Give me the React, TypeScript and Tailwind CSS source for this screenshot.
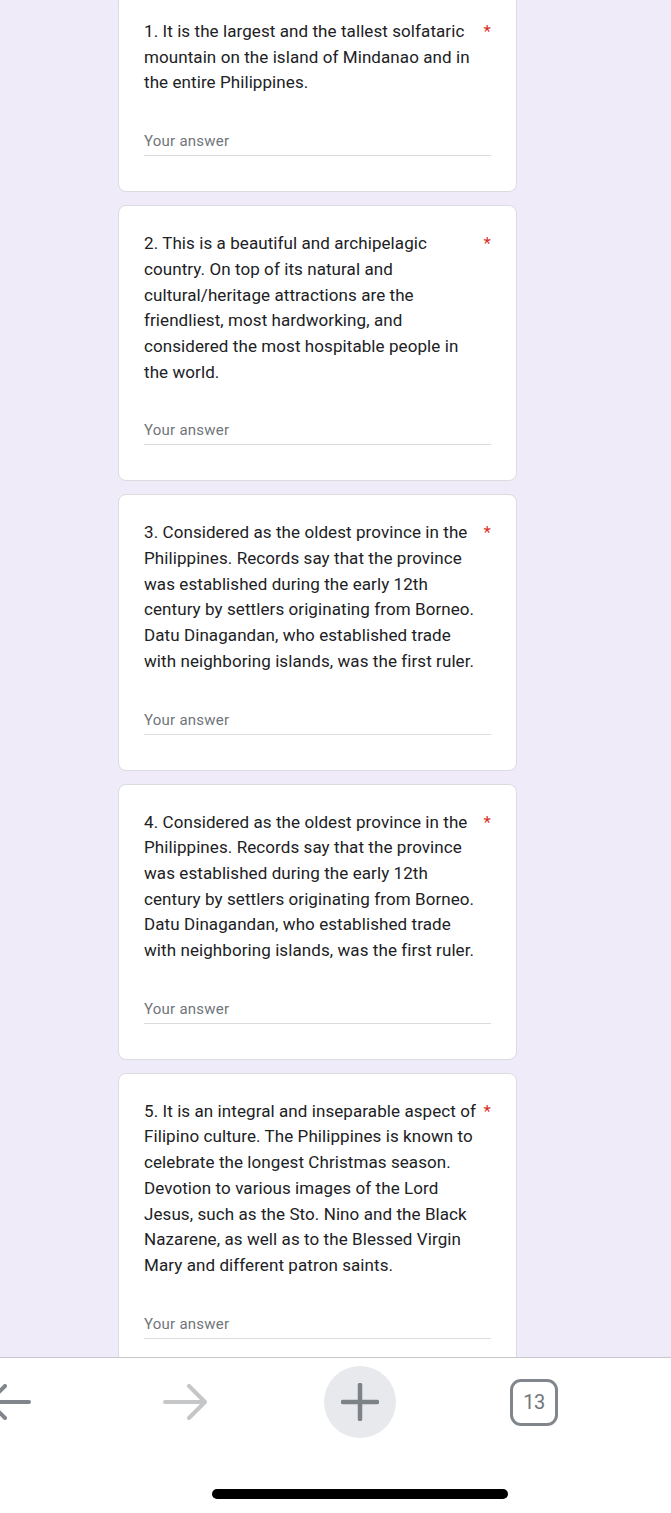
import React from "react";

const questions = [
  "1. It is the largest and the tallest solfataric mountain on the island of Mindanao and in the entire Philippines.",
  "2. This is a beautiful and archipelagic country. On top of its natural and cultural/heritage attractions are the friendliest, most hardworking, and considered the most hospitable people in the world.",
  "3. Considered as the oldest province in the Philippines. Records say that the province was established during the early 12th century by settlers originating from Borneo. Datu Dinagandan, who established trade with neighboring islands, was the first ruler.",
  "4. Considered as the oldest province in the Philippines. Records say that the province was established during the early 12th century by settlers originating from Borneo. Datu Dinagandan, who established trade with neighboring islands, was the first ruler.",
  "5. It is an integral and inseparable aspect of Filipino culture. The Philippines is known to celebrate the longest Christmas season. Devotion to various images of the Lord Jesus, such as the Sto. Nino and the Black Nazarene, as well as to the Blessed Virgin Mary and different patron saints.",
];

const QuestionCard = ({ text }: { text: string }) => (
  <div className="w-[399px] shrink-0 rounded-[8px] border border-[#dadce0] bg-white px-[25px] pt-[25px] pb-[35px]">
    {/* question + required mark */}
    <div className="flex text-[17px] leading-[25.7px] tracking-[0.08px] text-[#202124]">
      <span className="flex-1 min-w-0">{text}</span>
      <span className="w-[12px] shrink-0 text-right text-[#d93025]">*</span>
    </div>

    {/* answer field */}
    <div className="mt-[35px] border-b border-[#dadce0] pb-[4px] text-[15px] leading-[20px] tracking-[0.25px] text-[#70757a]">
      Your answer
    </div>
  </div>
);

const App = () => {
  return (
    <div
      className="flex h-[1513px] w-[671px] flex-col overflow-hidden bg-white"
      style={{ fontFamily: "Roboto, 'Noto Sans', sans-serif" }}
    >
      {/* the form, scrolled */}
      <div className="flex-1 min-h-0 overflow-hidden bg-[#efebf8]">
        <div className="-mt-[7px] flex flex-col items-start gap-[13px] pl-[118px]">
          {questions.map((q, i) => (
            <QuestionCard key={i} text={q} />
          ))}
        </div>
      </div>

      {/* browser toolbar */}
      <div className="h-[156px] shrink-0 border-t border-[#c8c8cc] bg-white">
        <div className="relative flex h-[88px] items-center">
          <svg
            width="44"
            height="36"
            viewBox="0 0 44 36"
            className="-ml-[13px] shrink-0"
            fill="none"
            stroke="#80868b"
            strokeWidth="4"
            strokeLinecap="round"
            strokeLinejoin="round"
          >
            <path d="M42 18H2M18 2L2 18l16 16" />
          </svg>
          <svg
            width="44"
            height="36"
            viewBox="0 0 44 36"
            className="ml-[132px] shrink-0"
            fill="none"
            stroke="#c4c6c8"
            strokeWidth="4"
            strokeLinecap="round"
            strokeLinejoin="round"
          >
            <path d="M2 18h40M26 2l16 16-16 16" />
          </svg>
          <div className="ml-[117px] flex h-[72px] w-[72px] shrink-0 items-center justify-center rounded-full bg-[#e8e9ec]">
            <svg
              width="38"
              height="38"
              viewBox="0 0 38 38"
              fill="none"
              stroke="#7d8287"
              strokeWidth="4.5"
              strokeLinecap="round"
            >
              <path d="M19 2v34M2 19h34" />
            </svg>
          </div>
          <div className="ml-[114px] flex h-[47px] w-[48px] shrink-0 items-center justify-center rounded-[11px] border-[3.5px] border-[#80868b] text-[20px] leading-none tracking-[-0.5px] text-[#70757a]">
            13
          </div>
        </div>

        {/* home indicator */}
        <div className="mt-[43px] flex justify-center pl-[49px]">
          <div className="h-[10px] w-[296px] rounded-full bg-black" />
        </div>
      </div>
    </div>
  );
};

export default App;
